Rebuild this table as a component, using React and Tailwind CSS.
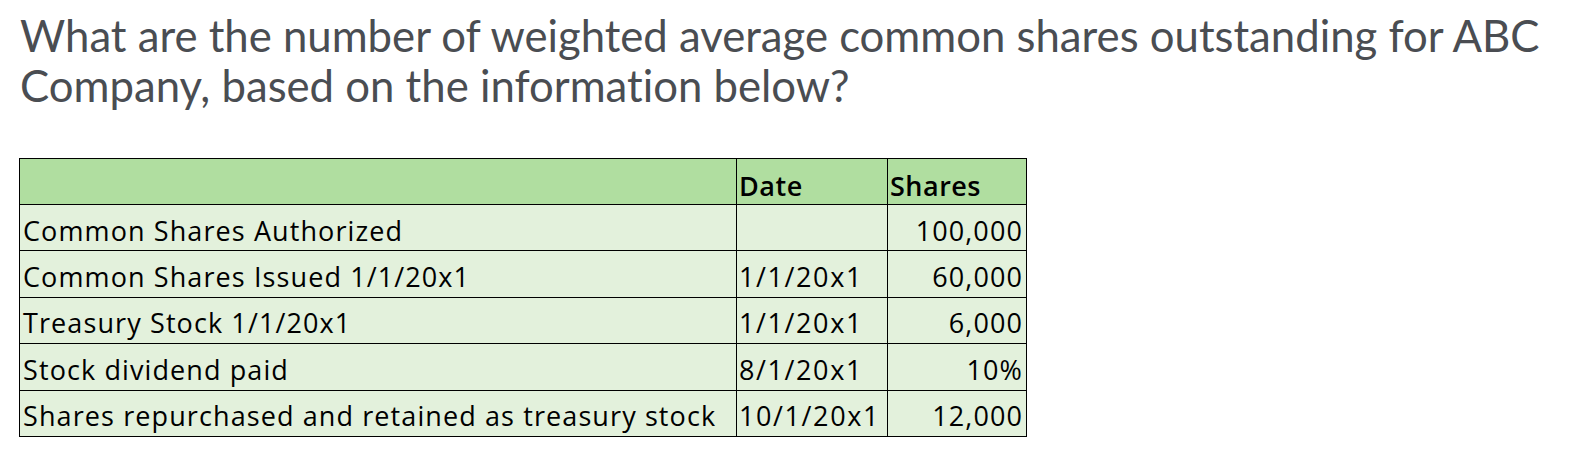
import React from 'react';

const rows = [
  { label: 'Common Shares Authorized', date: '', shares: '100,000' },
  { label: 'Common Shares Issued 1/1/20x1', date: '1/1/20x1', shares: '60,000' },
  { label: 'Treasury Stock 1/1/20x1', date: '1/1/20x1', shares: '6,000' },
  { label: 'Stock dividend paid', date: '8/1/20x1', shares: '10%' },
  { label: 'Shares repurchased and retained as treasury stock', date: '10/1/20x1', shares: '12,000' },
];

export default function App() {
  return (
    <div className="bg-white min-h-[455px] pl-[20px] pt-[10px]">
      <h1 className="font-['Lato',sans-serif] text-[43.7px] leading-[50px] text-[#4a4d52] font-normal [font-variant-ligatures:none]">
        What are the number of weighted average common shares outstanding for ABC Company, based on the information below?
      </h1>

      <table className="mt-[48px] -ml-px border-collapse font-['Open_Sans',sans-serif] text-[27px] tracking-[1.1px] text-black">
        <colgroup>
          <col className="w-[717px]" />
          <col className="w-[151px]" />
          <col className="w-[139px]" />
        </colgroup>
        <thead>
          <tr className="bg-[#b0dea0] h-[46px]">
            <th className="border border-black" />
            <th className="border border-black text-left font-semibold px-[2px] align-bottom leading-[36px] tracking-[0.5px]">Date</th>
            <th className="border border-black text-left font-semibold px-[2px] align-bottom leading-[36px] tracking-[0.5px]">Shares</th>
          </tr>
        </thead>
        <tbody>
          {rows.map((r) => (
            <tr key={r.label} className="bg-[#e3f1dc] h-[46.4px]">
              <td className="border border-black px-[3px] pt-[6px] whitespace-nowrap leading-[32px]">{r.label}</td>
              <td className="border border-black px-[2px] pt-[6px] whitespace-nowrap leading-[32px] tracking-[1.6px]">{r.date}</td>
              <td className="border border-black pl-[2px] pr-[3px] pt-[6px] text-right leading-[32px]">{r.shares}</td>
            </tr>
          ))}
        </tbody>
      </table>
    </div>
  );
}
